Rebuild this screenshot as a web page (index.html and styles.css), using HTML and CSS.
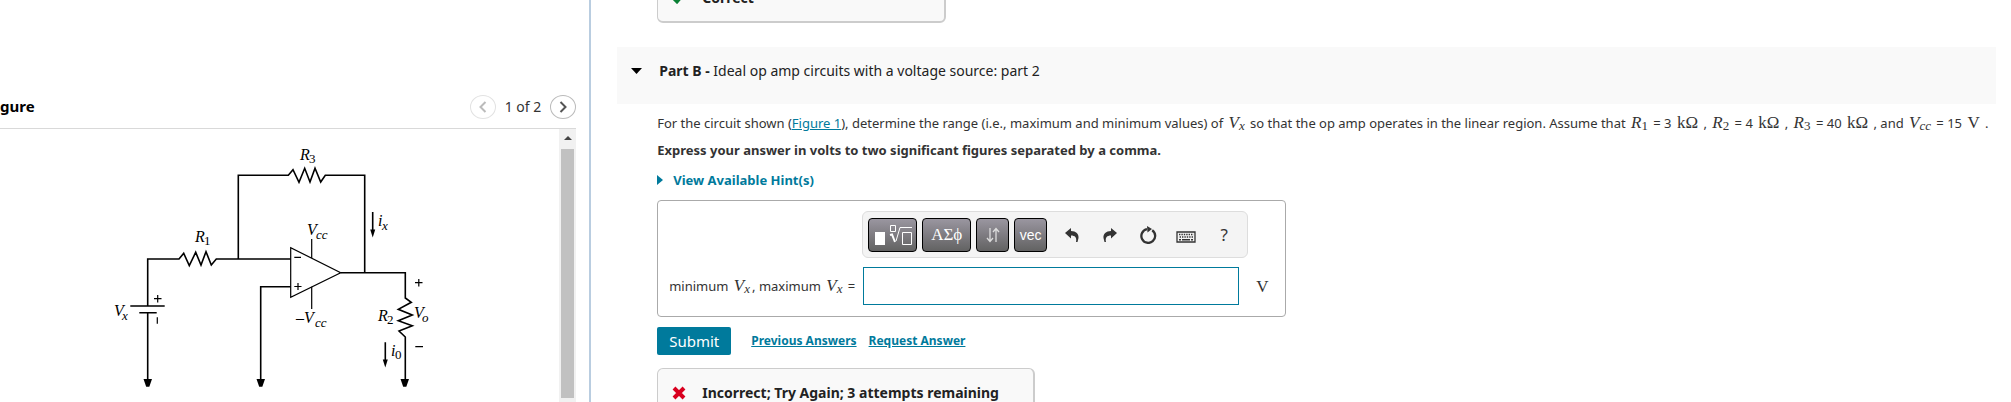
FILE: index.html
```html
<!DOCTYPE html>
<html lang="en">
<head>
    <meta charset="UTF-8">
    <meta name="viewport" content="width=device-width, initial-scale=1.0">
    <title>Part B - Ideal op amp circuits</title>
    <link rel="stylesheet" href="styles.css">
</head>
<body>
    <aside class="figure-pane">
        <header class="figure-header">
            <h2 class="figure-title">gure</h2>
            <nav class="pager">
                <button class="pager-button" type="button" aria-label="Previous figure" disabled>
                    <svg width="8" height="12" viewBox="0 0 8 12"><path d="M6.5 1 L1.5 6 L6.5 11"/></svg>
                </button>
                <span class="pager-text">1 of 2</span>
                <button class="pager-button" type="button" aria-label="Next figure">
                    <svg width="8" height="12" viewBox="0 0 8 12"><path d="M1.5 1 L6.5 6 L1.5 11"/></svg>
                </button>
            </nav>
        </header>
        <div class="figure-body">
            <div class="figure-canvas">
                <svg class="circuit" width="350" height="270" viewBox="0 0 350 270">
                    <!-- wires and resistors -->
                    <g class="wire">
                        <path d="M47.7 177 V130 H79 L83.7 124.3 L89.3 136.7 L95.7 123.3 L101 136 L106 122.7 L111.3 136 L116.3 130 H190.7"/>
                        <path d="M138.3 130 V46.3 H188.3 L193 40.7 L199 53.3 L204.7 39.3 L210 53 L215 39.3 L220.7 53 L225.3 46.3 H264.7 V143.7"/>
                        <path d="M240.7 143.7 H305.3 V169 L311.3 173.3 L298.3 180.3 L312.3 186 L298.3 191.7 L312.3 196.7 L299 202 L305.3 208 V252"/>
                        <path d="M190.7 157.7 H160.7 V252"/>
                        <path d="M30.3 177 H64.7 M39.3 183.7 H56.7 M47.7 183.7 V252"/>
                        <path d="M272.7 83 V102 M285.3 213.3 V232"/>
                    </g>
                    <g class="thin">
                        <path d="M190.7 118.7 V168.3 L240.7 143.7 Z"/>
                        <path d="M211.7 110 V129 M211.7 157.7 V180"/>
                        <path d="M57.3 188.3 V194.7"/>
                        <path d="M54 169.7 H61.5 M57.7 166 V173.4"/>
                        <path d="M194.3 128.3 H201 M194.3 157.5 H201.5 M198 154 V161"/>
                        <path d="M315 153.7 H322.5 M318.8 150 V157.4 M315.3 217.7 H323"/>
                    </g>
                    <g class="heads">
                        <path d="M43.5 250 H52 L49.3 257.7 H46.2 Z"/>
                        <path d="M156.5 250 H165 L162.3 257.7 H159.2 Z"/>
                        <path d="M300.5 250 H309 L306.3 257.7 H303.2 Z"/>
                        <path d="M270.2 100.5 H275.2 L272.7 108.5 Z"/>
                        <path d="M282.8 230.5 H287.8 L285.3 238.5 Z"/>
                    </g>
                    <g class="names">
                        <text x="200" y="31">R</text><text class="num" x="209" y="34">3</text>
                        <text x="95" y="113">R</text><text class="num" x="104" y="116">1</text>
                        <text x="207" y="106">V</text><text class="sub" x="216" y="110">cc</text>
                        <text x="196" y="194">–V</text><text class="sub" x="215" y="198">cc</text>
                        <text x="14" y="187">V</text><text class="sub" x="22" y="191">x</text>
                        <text x="278" y="192">R</text><text class="num" x="287" y="195">2</text>
                        <text x="314" y="189">V</text><text class="sub" x="322" y="193">o</text>
                        <text x="278" y="97">i</text><text class="sub" x="282" y="101">x</text>
                        <text x="291" y="227">i</text><text class="num" x="295" y="230">0</text>
                    </g>
                </svg>
            </div>
            <div class="scrollbar">
                <svg class="scroll-arrow" width="8" height="4" viewBox="0 0 8 4"><path d="M4 0 L8 4 H0 Z"/></svg>
                <div class="scroll-thumb"></div>
            </div>
        </div>
    </aside>
    <div class="splitter"></div>

    <main class="content">
        <div class="feedback feedback-correct">
            <svg width="14" height="12" viewBox="0 0 14 12"><path class="check" d="M1.5 6.5 L5 10 L12 2"/></svg>
            <strong>Correct</strong>
        </div>

        <section class="part">
            <header class="part-header">
                <svg class="caret" width="11" height="6" viewBox="0 0 11 6"><path d="M0 0 H11 L5.5 6 Z"/></svg>
                <h3 class="part-title"><b>Part B - </b>Ideal op amp circuits with a voltage source: part 2</h3>
            </header>

            <div class="part-body">
                <p class="problem">For the circuit shown (<a href="#figure1">Figure 1</a>), determine the range (i.e., maximum and minimum values) of <span class="math"><i>V</i><sub><i>x</i></sub></span> so that the op amp operates in the linear region. Assume that <span class="math"><i>R</i><sub>1</sub></span> = 3 <span class="math">kΩ</span> , <span class="math"><i>R</i><sub>2</sub></span> = 4 <span class="math">kΩ</span> , <span class="math"><i>R</i><sub>3</sub></span> = 40 <span class="math">kΩ</span> , and <span class="math"><i>V</i><sub><i>cc</i></sub></span> = 15 <span class="math">V</span> .</p>
                <p class="instruction">Express your answer in volts to two significant figures separated by a comma.</p>
                <button class="hints" type="button">
                    <svg width="6" height="10" viewBox="0 0 6 10"><path d="M0 0 L6 5 L0 10 Z"/></svg>
                    View Available Hint(s)
                </button>

                <form class="answer" id="answerForm">
                    <label class="answer-label" for="answer">minimum <span class="math"><i>V</i><sub><i>x</i></sub></span>, maximum <span class="math"><i>V</i><sub><i>x</i></sub></span> =</label>
                    <div class="answer-entry">
                        <div class="toolbar">
                            <button class="tool tool-wide" type="button" aria-label="Templates">
                                <svg width="38" height="24" viewBox="0 0 38 24">
                                    <path fill="#fff" d="M1 9 H11 V22 H1 Z"/>
                                    <path fill="none" stroke="#fff" d="M16.5 2.5 H21.5 V8.5 H16.5 Z M28.5 9.5 H37.5 V21.5 H28.5 Z M22 18 L26 4.5 H38"/>
                                    <path fill="none" stroke="#fff" stroke-width="2" d="M16 12 L18 11.5 L21 19"/>
                                </svg>
                            </button>
                            <button class="tool tool-wide tool-greek" type="button">ΑΣϕ</button>
                            <button class="tool" type="button" aria-label="Subscript and superscript">
                                <svg width="14" height="16" viewBox="0 0 14 16"><path fill="none" stroke="#ddd" stroke-width="1.3" d="M4 1 V14 M1 11 L4 14.5 L7 11 M10 15 V2 M7 5 L10 1.5 L13 5"/></svg>
                            </button>
                            <button class="tool" type="button">vec</button>
                            <div class="toolbar-actions">
                                <button class="action" type="button" aria-label="Undo">
                                    <svg width="14" height="14" viewBox="0 0 14 14"><path d="M0 5 L6 0 V3 C11 3 14 6 13.5 10 L12.5 14 H11 C12 9.5 10 7.5 6 7.5 V10.5 Z"/></svg>
                                </button>
                                <button class="action" type="button" aria-label="Redo">
                                    <svg width="14" height="14" viewBox="0 0 14 14"><path d="M14 5 L8 0 V3 C3 3 0 6 0.5 10 L1.5 14 H3 C2 9.5 4 7.5 8 7.5 V10.5 Z"/></svg>
                                </button>
                                <button class="action" type="button" aria-label="Reset">
                                    <svg width="18" height="18" viewBox="0 0 18 18"><path fill="none" stroke="#333" stroke-width="2.3" d="M13.2 4.3 A6.9 6.9 0 1 1 8 3.2"/><path d="M8 0 L13 3 L8.5 6.5 Z"/></svg>
                                </button>
                                <button class="action action-keyboard" type="button" aria-label="Keyboard shortcuts">
                                    <svg width="20" height="12" viewBox="0 0 20 12"><path fill="none" stroke="#333" stroke-width="1.3" d="M1 1 H19 V11 H1 Z"/><path fill="none" stroke="#333" stroke-width="1.4" stroke-dasharray="1.4 1" d="M3 3.5 H17.5 M3.6 6 H17"/><path fill="none" stroke="#333" stroke-width="1.5" d="M3 8.7 H5 M6 8.7 H14 M15 8.7 H17"/></svg>
                                </button>
                                <button class="action" type="button">?</button>
                            </div>
                        </div>
                        <div class="answer-row">
                            <input class="answer-input" id="answer" type="text">
                            <span class="math">V</span>
                        </div>
                    </div>
                </form>

                <div class="actions">
                    <button class="submit" type="submit" form="answerForm">Submit</button>
                    <a href="#previous">Previous Answers</a>
                    <a href="#request">Request Answer</a>
                </div>

                <div class="feedback feedback-incorrect">
                    <svg width="14" height="14" viewBox="0 0 14 14"><path class="cross" d="M2 2 L12 12 M12 2 L2 12"/></svg>
                    <strong>Incorrect; Try Again; 3 attempts remaining</strong>
                </div>
            </div>
        </section>
    </main>
</body>
</html>
```

FILE: styles.css
```css
* {
    box-sizing: border-box;
}
body {
    margin: 0;
    height: 100vh;
    display: flex;
    overflow: hidden;
    background-color: #fff;
    color: #333;
    font-family: "Noto Sans", "Open Sans", sans-serif;
    font-size: 13px;
    line-height: 20px;
}
button {
    font-family: inherit;
    padding: 0;
    cursor: pointer;
}
h2, h3, p {
    margin: 0;
}
a {
    color: #007a9c;
}

/* Left pane */
.figure-pane {
    flex: 0 0 29.3%;
    display: flex;
    flex-direction: column;
    padding: 86px 13px 0 0;
}
.figure-header {
    display: flex;
    align-items: center;
    justify-content: space-between;
    height: 43px;
    border-bottom: 1px solid #d9d9d9;
}
.figure-title {
    padding-bottom: 2px;
    font-size: 15px;
    color: #000;
}
.pager {
    display: flex;
    align-items: center;
    gap: 9px;
}
.pager-text {
    font-size: 14px;
}
.pager-button {
    display: flex;
    align-items: center;
    justify-content: center;
    width: 26px;
    height: 24px;
    border: 1px solid #bbb;
    border-radius: 50%;
    background-color: #fff;
}
.pager-button path {
    fill: none;
    stroke: #555;
    stroke-width: 2;
}
.pager-button:disabled {
    border-color: #e2e2e2;
    cursor: default;
}
.pager-button:disabled path {
    stroke: #bbb;
}
.figure-body {
    flex: 1;
    display: flex;
    min-height: 0;
}
.figure-canvas {
    flex: 1;
    padding-left: 100px;
}
.circuit {
    display: block;
}
.wire {
    fill: none;
    stroke: #000;
    stroke-width: 1.6;
}
.thin {
    fill: none;
    stroke: #000;
    stroke-width: 1.2;
}
.names {
    font-family: "Liberation Serif", serif;
    font-size: 16px;
    font-style: italic;
    fill: #000;
}
.names .sub {
    font-size: 13px;
}
.names .num {
    font-size: 13px;
    font-style: normal;
}
.scrollbar {
    display: flex;
    flex-direction: column;
    align-items: center;
    width: 17px;
    padding: 7px 2px 4px;
    background-color: #f1f1f1;
}
.scroll-arrow {
    flex: none;
    margin-bottom: 9px;
    fill: #444;
}
.scroll-thumb {
    flex: 1;
    width: 100%;
    background-color: #c1c1c1;
}
.splitter {
    width: 2px;
    background-color: #b9cde0;
}

/* Right pane */
.content {
    flex: 1;
    min-width: 0;
    padding: 0 15px 0 26px;
    overflow: hidden;
}
.feedback {
    display: flex;
    align-items: center;
    gap: 16px;
    width: fit-content;
    height: 50px;
    padding: 0 34px 0 14px;
    border: 1px solid #ccc;
    border-width: 1px 2px 2px 1px;
    border-radius: 6px;
    background-color: #f9f9f9;
    color: #222;
    font-size: 14px;
}
.feedback-correct {
    width: 289px;
    margin: -27px 0 24px 40px;
}
.check {
    fill: none;
    stroke: #0a8035;
    stroke-width: 3;
}
.cross {
    stroke: #d9001f;
    stroke-width: 4;
}
.part-header {
    display: flex;
    align-items: center;
    gap: 17px;
    height: 57px;
    padding: 0 14px 10px;
    background-color: #f9f9f9;
    color: #222;
}
.part-title {
    font-size: 14px;
    font-weight: normal;
}
.part-body {
    padding-left: 40px;
}
.problem {
    margin-top: 9px;
    white-space: nowrap;
}
.math {
    margin: 0 2px;
    font-family: "Liberation Serif", serif;
    font-size: 17px;
    line-height: 1;
}
.math sub {
    font-size: 13px;
    line-height: 1;
    vertical-align: -2px;
}
.instruction {
    margin-top: 7px;
    font-weight: bold;
}
.hints {
    display: flex;
    align-items: center;
    gap: 10px;
    margin-top: 10px;
    border: none;
    background: none;
    color: #007a9c;
    font-size: 13px;
    font-weight: bold;
    line-height: 20px;
}
.hints svg {
    fill: #007a9c;
}
.answer {
    display: flex;
    align-items: flex-end;
    gap: 9px;
    width: fit-content;
    margin-top: 10px;
    padding: 10px 14px 11px 11px;
    border: 1px solid #aaa;
    border-radius: 4px;
}
.answer-label {
    width: 184px;
    padding-bottom: 9px;
    white-space: nowrap;
}
.toolbar {
    display: flex;
    align-items: center;
    gap: 5px;
    width: 386px;
    height: 47px;
    padding: 0 5px;
    border: 1px solid #ddd;
    border-radius: 6px;
    background-color: #f4f4f4;
}
.tool {
    display: flex;
    align-items: center;
    justify-content: center;
    width: 33px;
    height: 34px;
    border: 1px solid #000;
    border-radius: 4px;
    background: linear-gradient(#9a96a0, #626262);
    color: #fff;
    font-family: "Liberation Sans", Arial, sans-serif;
    font-size: 14px;
}
.tool-wide {
    width: 49px;
}
.tool-greek {
    font-family: "Liberation Serif", serif;
    font-size: 17px;
}
.toolbar-actions {
    display: flex;
    gap: 4px;
    margin-left: 3px;
}
.action {
    display: flex;
    align-items: center;
    justify-content: center;
    width: 34px;
    height: 34px;
    border: none;
    background: none;
    color: #333;
    font-size: 17px;
}
.action svg {
    fill: #333;
}
.action-keyboard {
    padding-top: 4px;
}
.answer-row {
    display: flex;
    align-items: center;
    gap: 15px;
    margin-top: 9px;
}
.answer-input {
    width: 376px;
    height: 38px;
    margin-left: 1px;
    border: 1px solid #007a9c;
    background-color: #fff;
}
.actions {
    display: flex;
    align-items: center;
    gap: 12px;
    margin-top: 10px;
    font-size: 12px;
    font-weight: bold;
}
.submit {
    width: 74px;
    height: 28px;
    margin-right: 8px;
    border: none;
    border-radius: 2px;
    background-color: #007a9c;
    color: #fff;
    font-size: 15px;
}
.feedback-incorrect {
    margin-top: 13px;
}
```
